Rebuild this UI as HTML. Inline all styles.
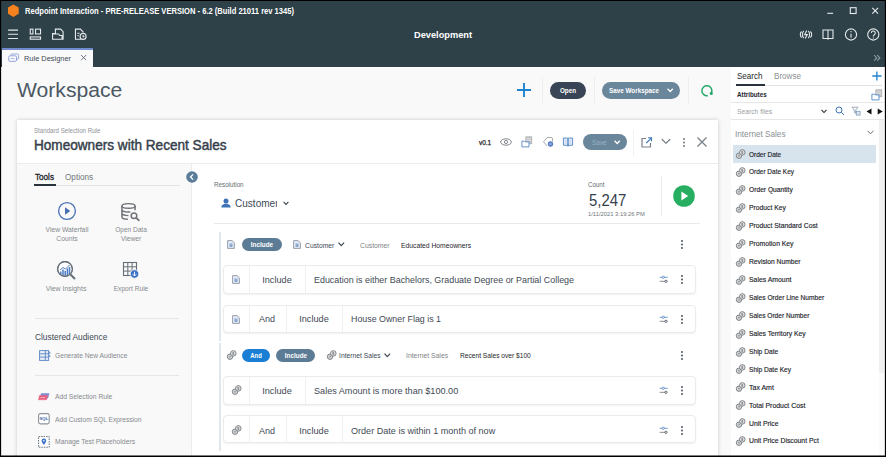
<!DOCTYPE html>
<html><head><meta charset="utf-8"><title>Redpoint Interaction</title>
<style>
*{box-sizing:border-box;margin:0;padding:0}
html,body{width:886px;height:457px;overflow:hidden;background:#000}
body{font-family:"Liberation Sans",sans-serif;position:relative;color:#3c4a57}
.a{position:absolute}
.t{position:absolute;white-space:nowrap;line-height:1}
svg{overflow:visible}
</style></head><body>
<div class="a" style="left:1px;top:1px;width:884px;height:455px;background:#f9f9f9;"></div>
<div class="a" style="left:1px;top:1px;width:884px;height:66.4px;background:#2e4048;"></div>
<div class="a" style="left:93.2px;top:67.4px;width:792px;height:1px;background:#fff;"></div>
<div class="a" style="left:2px;top:47.6px;width:91.2px;height:20.4px;background:#f9f9f9;border-top:2.100px solid #7189cd"></div>
<div class="a" style="left:731px;top:67.4px;width:154px;height:388.6px;background:#fff;"></div>
<div class="a" style="left:17px;top:120px;width:700.6px;height:340px;background:#fff;box-shadow:0 0 4px rgba(0,0,0,.2)"></div>
<div class="a" style="left:17px;top:163px;width:174px;height:293px;background:#f9f9f9;"></div>
<div class="a" style="left:17px;top:163px;width:700.6px;height:1px;background:#ececec;"></div>
<div class="a" style="left:191px;top:164px;width:1px;height:292px;background:#ececec;"></div>
<svg class="a" style="left:0px;top:0px" width="24" height="22" viewBox="0 0 24 22" ><path d="M13.350 4.500 L18.700 7.600 L18.700 13.800 L13.350 16.900 L8 13.800 L8 7.600 Z" fill="#f5821f"/></svg>
<div class="t" style="left:24.60px;top:7.30px;font-size:8.4px;color:#fff;transform:scaleX(0.9045);transform-origin:left center;font-weight:bold"><span id="t1">Redpoint Interaction - PRE-RELEASE VERSION - 6.2 (Build 21011 rev 1345)</span></div>
<svg class="a" style="left:822px;top:4px" width="60" height="14" viewBox="0 0 60 14" fill="none" stroke="#e8ecee" stroke-width="1.100"><path d="M5.300 9.300h5.800"/><rect x="28.300" y="3.700" width="5.800" height="5.800"/><path d="M50.300 3.800l5.800 5.800M56.100 3.800l-5.800 5.800"/></svg>
<svg class="a" style="left:6px;top:26px" width="90" height="18" viewBox="0 0 90 18" fill="none" stroke="#e4e8ea" stroke-width="1.100"><path d="M2.100 4.100h9.900M2.100 8.300h9.900M2.100 12.500h9.900"/>
<rect x="24.250" y="3.150" width="2.700" height="4.800"/><rect x="29.550" y="3.150" width="5" height="4.800"/><rect x="24.250" y="10.950" width="10.300" height="2.250"/>
<path d="M46.550 13.200 V7.650 H49.400 V3.150 H54.600 L57.100 5.700 V13.200 Z M46.800 8 h5.800 l1 1.500 h2.500 v3.500"/>
<path d="M75 13.200 H69.450 V3.150 H74.400 L77 5.800 V6.500 M71.300 7.300 h2.300 M71.300 9.700 h1.500"/><circle cx="77.100" cy="10.400" r="3"/><path d="M77.100 8.900 v1.700 h1.300"/></svg>
<div class="t" style="left:293.00px;width:300px;text-align:center;top:30.80px;font-size:9.2px;color:#fff;transform:scaleX(1.0051);transform-origin:center center;font-weight:bold"><span id="t2">Development</span></div>
<svg class="a" style="left:796px;top:26px" width="86" height="18" viewBox="0 0 86 18" fill="none" stroke="#e4e8ea" stroke-width="1.100"><path d="M7.800 4.800 C6 6.300 6 10.700 7.800 12.200 M5.600 5.500 C3.900 7 3.900 10 5.600 11.500 M12.200 4.800 C14 6.300 14 10.700 12.200 12.200 M14.400 5.500 C16.100 7 16.100 10 14.400 11.500 M10.800 4.600 L8.700 8.600 h2.600 L9.200 12.400"/>
<path d="M27 4 h5 v8.500 h-5 z M32 4 h5 v8.500 h-5 z M32 12.500 v1.300"/>
<circle cx="55" cy="8.500" r="5.600"/><path d="M55 7.800 v4 M55 5 v1.300"/>
<circle cx="77.300" cy="8.500" r="5.600"/><path d="M75.300 7 a2 2 0 1 1 3 1.700 c-0.800 0.500 -1 0.900 -1 1.700 M77.300 11.600 v1"/></svg>
<svg class="a" style="left:873px;top:54px" width="8" height="8" viewBox="0 0 8 8" fill="none" stroke="#8c9da6" stroke-width="1.150"><path d="M1.200 1.200 L3.700 3.900 L1.200 6.600 M4.300 1.200 L6.800 3.900 L4.300 6.600"/></svg>
<svg class="a" style="left:7px;top:52px" width="14" height="12" viewBox="0 0 14 12" fill="none" stroke="#8b9dd9" stroke-width="0.900"><rect x="3.800" y="2" width="7.800" height="5.300" rx="1.400"/><rect x="1.700" y="3.800" width="7.800" height="5.600" rx="1.400" fill="#f9f9f9"/><path d="M3.500 6.600 h4.200" stroke-width="0.700"/></svg>
<div class="t" style="left:24.00px;top:54.70px;font-size:8px;color:#3c4a57;transform:scaleX(0.9270);transform-origin:left center;"><span id="t3">Rule Designer</span></div>
<svg class="a" style="left:80px;top:54px" width="7" height="7" viewBox="0 0 7 7" stroke="#5f6870" stroke-width="0.900"><path d="M1 1 L6.200 6.200 M6.200 1 L1 6.200"/></svg>
<div class="t" style="left:17.00px;top:80.20px;font-size:20px;color:#4b5864;transform:scaleX(1.0565);transform-origin:left center;"><span id="t4">Workspace</span></div>
<svg class="a" style="left:516px;top:82px" width="16" height="16" viewBox="0 0 16 16" stroke="#1e83cf" stroke-width="1.900"><path d="M8 1v14M1 8h14"/></svg>
<div class="a" style="left:541.5px;top:77px;width:1px;height:26px;background:#ededed;"></div>
<div class="a" style="left:593.5px;top:77px;width:1px;height:26px;background:#ededed;"></div>
<div class="a" style="left:688px;top:77px;width:1px;height:26px;background:#ededed;"></div>
<div class="a" style="left:549.500px;top:81.800px;width:36.500px;height:16.800px;border-radius:9px;background:#394556"></div>
<div class="t" style="left:417.70px;width:300px;text-align:center;top:86.70px;font-size:7.2px;color:#fff;transform:scaleX(0.8762);transform-origin:center center;font-weight:bold"><span id="t5">Open</span></div>
<div class="a" style="left:602px;top:81.800px;width:77.600px;height:16.800px;border-radius:9px;background:#69869b"></div>
<div class="t" style="left:608.80px;top:86.70px;font-size:7.2px;color:#fff;transform:scaleX(0.8787);transform-origin:left center;font-weight:bold"><span id="t6">Save Workspace</span></div>
<svg class="a" style="left:666.8px;top:88px" width="6.4" height="5" viewBox="0 0 6.4 5" fill="none" stroke="#fff" stroke-width="1.300"><path d="M0.600 0.700 L3.200 3.500 L5.800 0.700"/></svg>
<svg class="a" style="left:699.7px;top:83.5px" width="14" height="14" viewBox="0 0 14 14" fill="none" stroke="#25a86a" stroke-width="1.500"><path d="M7.800 11.700 A5 5 0 1 1 11.700 8.200"/><path d="M9.700 8.300 L12.700 7.900 L12.500 10.900 L10 10.800 Z" fill="#1fa565" stroke="none"/></svg>
<div class="t" style="left:737.40px;top:72.45px;font-size:8.5px;color:#1e252c;transform:scaleX(0.9429);transform-origin:left center;"><span id="t7">Search</span></div>
<div class="t" style="left:773.50px;top:72.45px;font-size:8.5px;color:#8a8f94;transform:scaleX(0.9491);transform-origin:left center;"><span id="t8">Browse</span></div>
<div class="a" style="left:736px;top:84.5px;width:146px;height:1px;background:#e3e3e3;"></div>
<div class="a" style="left:736px;top:83.5px;width:28.7px;height:2px;background:#2a333c;"></div>
<svg class="a" style="left:872px;top:70.6px" width="10" height="10" viewBox="0 0 10 10" stroke="#1e83cf" stroke-width="1.350"><path d="M4.900 0.400v9.200M0.300 5h9.200"/></svg>
<div class="t" style="left:737.40px;top:90.80px;font-size:7.2px;color:#1e252c;transform:scaleX(0.8747);transform-origin:left center;font-weight:bold"><span id="t9">Attributes</span></div>
<svg class="a" style="left:871px;top:88.5px" width="12" height="12" viewBox="0 0 12 12" fill="none" stroke="#3d78b8" stroke-width="0.900"><rect x="4.800" y="0.800" width="6" height="7" fill="#c4c6c9" stroke="#a9acb0" stroke-width="0.700"/><path d="M5.500 2.800 h4.600 M5.500 4.600 h4.600" stroke="#e6e7e8" stroke-width="0.700"/><path d="M0.900 5.200 h2.600 l0.700 0.700 h3.800 v5 h-7.100 z" fill="#fff" stroke="#5189c7" stroke-width="0.900"/></svg>
<div class="a" style="left:731px;top:102px;width:153px;height:1px;background:#e6e6e6;"></div>
<div class="t" style="left:737.40px;top:109.05px;font-size:7.1px;color:#9a9fa4;transform:scaleX(0.9497);transform-origin:left center;"><span id="t10">Search files</span></div>
<svg class="a" style="left:821.2px;top:109px" width="6" height="5" viewBox="0 0 6 5" fill="none" stroke="#333" stroke-width="1.100"><path d="M0.500 0.800 L3 3.500 L5.500 0.800"/></svg>
<svg class="a" style="left:835px;top:106.3px" width="10" height="10" viewBox="0 0 10 10" fill="none" stroke="#3b74b8" stroke-width="1"><circle cx="4" cy="4" r="3"/><path d="M6.300 6.300 L9 9"/></svg>
<svg class="a" style="left:851px;top:106px" width="11" height="11" viewBox="0 0 11 11" fill="none" stroke="#8496aa" stroke-width="0.800"><path d="M1 1.200 h6 l-2.300 2.900 v3.200 l-1.400 -0.900 v-2.300 z"/><rect x="5.300" y="5.300" width="3.800" height="3.800" fill="#dfe6ee" stroke="#7f9bbd"/></svg>
<svg class="a" style="left:866px;top:107.5px" width="18" height="7" viewBox="0 0 18 7" fill="#111"><path d="M5.500 0.500 v6 L0.500 3.500 z M11.700 0.500 v6 L16.700 3.500 z"/></svg>
<div class="a" style="left:731px;top:119px;width:153px;height:1px;background:#e6e6e6;"></div>
<div class="a" style="left:878.5px;top:120px;width:5.5px;height:335.5px;background:#fafafa;"></div>
<div class="a" style="left:878.5px;top:120px;width:5.5px;height:253px;background:#f0f0f0;"></div>
<div class="t" style="left:735.00px;top:129.70px;font-size:8.6px;color:#8a8f94;transform:scaleX(0.9523);transform-origin:left center;"><span id="t11">Internet Sales</span></div>
<svg class="a" style="left:867.1px;top:130px" width="7" height="5" viewBox="0 0 7 5" fill="none" stroke="#6a6f74" stroke-width="1"><path d="M0.600 0.800 L3.500 3.800 L6.400 0.800"/></svg>
<div class="a" style="left:733px;top:145.2px;width:143px;height:17.5px;background:#d7e4ee;"></div>
<svg class="a" style="left:735.0px;top:149.3px" width="11" height="10" viewBox="0 0 11 10" fill="none" stroke="#777b80" stroke-width="0.950"><circle cx="4" cy="6.700" r="2.700" fill="#d9dadb"/><circle cx="7.300" cy="3.400" r="2.750" fill="#e4e5e6"/><path d="M7.300 1.900 v3 M8.100 2.500 h-1.200 a0.500 0.500 0 0 0 0 1 h0.800 a0.500 0.500 0 0 1 0 1 h-1.300" stroke-width="0.550"/><path d="M2.800 6.700 h2.400 M4 5.500 v2.400" stroke-width="0.500"/></svg>
<div class="t" style="left:748.50px;top:151.55px;font-size:7.1px;color:#1e252c;transform:scaleX(0.9175);transform-origin:left center;-webkit-text-stroke:0.15px #1e252c;"><span id="t12">Order Date</span></div>
<svg class="a" style="left:735.0px;top:167.23000000000002px" width="11" height="10" viewBox="0 0 11 10" fill="none" stroke="#777b80" stroke-width="0.950"><circle cx="4" cy="6.700" r="2.700" fill="#d9dadb"/><circle cx="7.300" cy="3.400" r="2.750" fill="#e4e5e6"/><path d="M7.300 1.900 v3 M8.100 2.500 h-1.200 a0.500 0.500 0 0 0 0 1 h0.800 a0.500 0.500 0 0 1 0 1 h-1.300" stroke-width="0.550"/><path d="M2.800 6.700 h2.400 M4 5.500 v2.400" stroke-width="0.500"/></svg>
<div class="t" style="left:748.50px;top:169.48px;font-size:7.1px;color:#1e252c;transform:scaleX(0.9128);transform-origin:left center;-webkit-text-stroke:0.15px #1e252c;"><span id="t13">Order Date Key</span></div>
<svg class="a" style="left:735.0px;top:185.16000000000003px" width="11" height="10" viewBox="0 0 11 10" fill="none" stroke="#777b80" stroke-width="0.950"><circle cx="4" cy="6.700" r="2.700" fill="#d9dadb"/><circle cx="7.300" cy="3.400" r="2.750" fill="#e4e5e6"/><path d="M7.300 1.900 v3 M8.100 2.500 h-1.200 a0.500 0.500 0 0 0 0 1 h0.800 a0.500 0.500 0 0 1 0 1 h-1.300" stroke-width="0.550"/><path d="M2.800 6.700 h2.400 M4 5.500 v2.400" stroke-width="0.500"/></svg>
<div class="t" style="left:748.50px;top:187.41px;font-size:7.1px;color:#1e252c;transform:scaleX(0.9413);transform-origin:left center;-webkit-text-stroke:0.15px #1e252c;"><span id="t14">Order Quantity</span></div>
<svg class="a" style="left:735.0px;top:203.09px" width="11" height="10" viewBox="0 0 11 10" fill="none" stroke="#777b80" stroke-width="0.950"><circle cx="4" cy="6.700" r="2.700" fill="#d9dadb"/><circle cx="7.300" cy="3.400" r="2.750" fill="#e4e5e6"/><path d="M7.300 1.900 v3 M8.100 2.500 h-1.200 a0.500 0.500 0 0 0 0 1 h0.800 a0.500 0.500 0 0 1 0 1 h-1.300" stroke-width="0.550"/><path d="M2.800 6.700 h2.400 M4 5.500 v2.400" stroke-width="0.500"/></svg>
<div class="t" style="left:748.50px;top:205.34px;font-size:7.1px;color:#1e252c;transform:scaleX(0.9520);transform-origin:left center;-webkit-text-stroke:0.15px #1e252c;"><span id="t15">Product Key</span></div>
<svg class="a" style="left:735.0px;top:221.02px" width="11" height="10" viewBox="0 0 11 10" fill="none" stroke="#777b80" stroke-width="0.950"><circle cx="4" cy="6.700" r="2.700" fill="#d9dadb"/><circle cx="7.300" cy="3.400" r="2.750" fill="#e4e5e6"/><path d="M7.300 1.900 v3 M8.100 2.500 h-1.200 a0.500 0.500 0 0 0 0 1 h0.800 a0.500 0.500 0 0 1 0 1 h-1.300" stroke-width="0.550"/><path d="M2.800 6.700 h2.400 M4 5.500 v2.400" stroke-width="0.500"/></svg>
<div class="t" style="left:748.50px;top:223.27px;font-size:7.1px;color:#1e252c;transform:scaleX(0.9573);transform-origin:left center;-webkit-text-stroke:0.15px #1e252c;"><span id="t16">Product Standard Cost</span></div>
<svg class="a" style="left:735.0px;top:238.95000000000002px" width="11" height="10" viewBox="0 0 11 10" fill="none" stroke="#777b80" stroke-width="0.950"><circle cx="4" cy="6.700" r="2.700" fill="#d9dadb"/><circle cx="7.300" cy="3.400" r="2.750" fill="#e4e5e6"/><path d="M7.300 1.900 v3 M8.100 2.500 h-1.200 a0.500 0.500 0 0 0 0 1 h0.800 a0.500 0.500 0 0 1 0 1 h-1.300" stroke-width="0.550"/><path d="M2.800 6.700 h2.400 M4 5.500 v2.400" stroke-width="0.500"/></svg>
<div class="t" style="left:748.50px;top:241.20px;font-size:7.1px;color:#1e252c;transform:scaleX(0.9563);transform-origin:left center;-webkit-text-stroke:0.15px #1e252c;"><span id="t17">Promotion Key</span></div>
<svg class="a" style="left:735.0px;top:256.88px" width="11" height="10" viewBox="0 0 11 10" fill="none" stroke="#777b80" stroke-width="0.950"><circle cx="4" cy="6.700" r="2.700" fill="#d9dadb"/><circle cx="7.300" cy="3.400" r="2.750" fill="#e4e5e6"/><path d="M7.300 1.900 v3 M8.100 2.500 h-1.200 a0.500 0.500 0 0 0 0 1 h0.800 a0.500 0.500 0 0 1 0 1 h-1.300" stroke-width="0.550"/><path d="M2.800 6.700 h2.400 M4 5.500 v2.400" stroke-width="0.500"/></svg>
<div class="t" style="left:748.50px;top:259.13px;font-size:7.1px;color:#1e252c;transform:scaleX(0.9466);transform-origin:left center;-webkit-text-stroke:0.15px #1e252c;"><span id="t18">Revision Number</span></div>
<svg class="a" style="left:735.0px;top:274.81px" width="11" height="10" viewBox="0 0 11 10" fill="none" stroke="#777b80" stroke-width="0.950"><circle cx="4" cy="6.700" r="2.700" fill="#d9dadb"/><circle cx="7.300" cy="3.400" r="2.750" fill="#e4e5e6"/><path d="M7.300 1.900 v3 M8.100 2.500 h-1.200 a0.500 0.500 0 0 0 0 1 h0.800 a0.500 0.500 0 0 1 0 1 h-1.300" stroke-width="0.550"/><path d="M2.800 6.700 h2.400 M4 5.500 v2.400" stroke-width="0.500"/></svg>
<div class="t" style="left:748.50px;top:277.06px;font-size:7.1px;color:#1e252c;transform:scaleX(0.9685);transform-origin:left center;-webkit-text-stroke:0.15px #1e252c;"><span id="t19">Sales Amount</span></div>
<svg class="a" style="left:735.0px;top:292.74px" width="11" height="10" viewBox="0 0 11 10" fill="none" stroke="#777b80" stroke-width="0.950"><circle cx="4" cy="6.700" r="2.700" fill="#d9dadb"/><circle cx="7.300" cy="3.400" r="2.750" fill="#e4e5e6"/><path d="M7.300 1.900 v3 M8.100 2.500 h-1.200 a0.500 0.500 0 0 0 0 1 h0.800 a0.500 0.500 0 0 1 0 1 h-1.300" stroke-width="0.550"/><path d="M2.800 6.700 h2.400 M4 5.500 v2.400" stroke-width="0.500"/></svg>
<div class="t" style="left:748.50px;top:294.99px;font-size:7.1px;color:#1e252c;transform:scaleX(0.9336);transform-origin:left center;-webkit-text-stroke:0.15px #1e252c;"><span id="t20">Sales Order Line Number</span></div>
<svg class="a" style="left:735.0px;top:310.67px" width="11" height="10" viewBox="0 0 11 10" fill="none" stroke="#777b80" stroke-width="0.950"><circle cx="4" cy="6.700" r="2.700" fill="#d9dadb"/><circle cx="7.300" cy="3.400" r="2.750" fill="#e4e5e6"/><path d="M7.300 1.900 v3 M8.100 2.500 h-1.200 a0.500 0.500 0 0 0 0 1 h0.800 a0.500 0.500 0 0 1 0 1 h-1.300" stroke-width="0.550"/><path d="M2.800 6.700 h2.400 M4 5.500 v2.400" stroke-width="0.500"/></svg>
<div class="t" style="left:748.50px;top:312.92px;font-size:7.1px;color:#1e252c;transform:scaleX(0.9283);transform-origin:left center;-webkit-text-stroke:0.15px #1e252c;"><span id="t21">Sales Order Number</span></div>
<svg class="a" style="left:735.0px;top:328.6px" width="11" height="10" viewBox="0 0 11 10" fill="none" stroke="#777b80" stroke-width="0.950"><circle cx="4" cy="6.700" r="2.700" fill="#d9dadb"/><circle cx="7.300" cy="3.400" r="2.750" fill="#e4e5e6"/><path d="M7.300 1.900 v3 M8.100 2.500 h-1.200 a0.500 0.500 0 0 0 0 1 h0.800 a0.500 0.500 0 0 1 0 1 h-1.300" stroke-width="0.550"/><path d="M2.800 6.700 h2.400 M4 5.500 v2.400" stroke-width="0.500"/></svg>
<div class="t" style="left:748.50px;top:330.85px;font-size:7.1px;color:#1e252c;transform:scaleX(0.9528);transform-origin:left center;-webkit-text-stroke:0.15px #1e252c;"><span id="t22">Sales Territory Key</span></div>
<svg class="a" style="left:735.0px;top:346.53px" width="11" height="10" viewBox="0 0 11 10" fill="none" stroke="#777b80" stroke-width="0.950"><circle cx="4" cy="6.700" r="2.700" fill="#d9dadb"/><circle cx="7.300" cy="3.400" r="2.750" fill="#e4e5e6"/><path d="M7.300 1.900 v3 M8.100 2.500 h-1.200 a0.500 0.500 0 0 0 0 1 h0.800 a0.500 0.500 0 0 1 0 1 h-1.300" stroke-width="0.550"/><path d="M2.800 6.700 h2.400 M4 5.500 v2.400" stroke-width="0.500"/></svg>
<div class="t" style="left:748.50px;top:348.78px;font-size:7.1px;color:#1e252c;transform:scaleX(0.9372);transform-origin:left center;-webkit-text-stroke:0.15px #1e252c;"><span id="t23">Ship Date</span></div>
<svg class="a" style="left:735.0px;top:364.46000000000004px" width="11" height="10" viewBox="0 0 11 10" fill="none" stroke="#777b80" stroke-width="0.950"><circle cx="4" cy="6.700" r="2.700" fill="#d9dadb"/><circle cx="7.300" cy="3.400" r="2.750" fill="#e4e5e6"/><path d="M7.300 1.900 v3 M8.100 2.500 h-1.200 a0.500 0.500 0 0 0 0 1 h0.800 a0.500 0.500 0 0 1 0 1 h-1.300" stroke-width="0.550"/><path d="M2.800 6.700 h2.400 M4 5.500 v2.400" stroke-width="0.500"/></svg>
<div class="t" style="left:748.50px;top:366.71px;font-size:7.1px;color:#1e252c;transform:scaleX(0.9259);transform-origin:left center;-webkit-text-stroke:0.15px #1e252c;"><span id="t24">Ship Date Key</span></div>
<svg class="a" style="left:735.0px;top:382.39px" width="11" height="10" viewBox="0 0 11 10" fill="none" stroke="#777b80" stroke-width="0.950"><circle cx="4" cy="6.700" r="2.700" fill="#d9dadb"/><circle cx="7.300" cy="3.400" r="2.750" fill="#e4e5e6"/><path d="M7.300 1.900 v3 M8.100 2.500 h-1.200 a0.500 0.500 0 0 0 0 1 h0.800 a0.500 0.500 0 0 1 0 1 h-1.300" stroke-width="0.550"/><path d="M2.800 6.700 h2.400 M4 5.500 v2.400" stroke-width="0.500"/></svg>
<div class="t" style="left:748.50px;top:384.64px;font-size:7.1px;color:#1e252c;transform:scaleX(0.9867);transform-origin:left center;-webkit-text-stroke:0.15px #1e252c;"><span id="t25">Tax Amt</span></div>
<svg class="a" style="left:735.0px;top:400.32px" width="11" height="10" viewBox="0 0 11 10" fill="none" stroke="#777b80" stroke-width="0.950"><circle cx="4" cy="6.700" r="2.700" fill="#d9dadb"/><circle cx="7.300" cy="3.400" r="2.750" fill="#e4e5e6"/><path d="M7.300 1.900 v3 M8.100 2.500 h-1.200 a0.500 0.500 0 0 0 0 1 h0.800 a0.500 0.500 0 0 1 0 1 h-1.300" stroke-width="0.550"/><path d="M2.800 6.700 h2.400 M4 5.500 v2.400" stroke-width="0.500"/></svg>
<div class="t" style="left:748.50px;top:402.57px;font-size:7.1px;color:#1e252c;transform:scaleX(0.9729);transform-origin:left center;-webkit-text-stroke:0.15px #1e252c;"><span id="t26">Total Product Cost</span></div>
<svg class="a" style="left:735.0px;top:418.25px" width="11" height="10" viewBox="0 0 11 10" fill="none" stroke="#777b80" stroke-width="0.950"><circle cx="4" cy="6.700" r="2.700" fill="#d9dadb"/><circle cx="7.300" cy="3.400" r="2.750" fill="#e4e5e6"/><path d="M7.300 1.900 v3 M8.100 2.500 h-1.200 a0.500 0.500 0 0 0 0 1 h0.800 a0.500 0.500 0 0 1 0 1 h-1.300" stroke-width="0.550"/><path d="M2.800 6.700 h2.400 M4 5.500 v2.400" stroke-width="0.500"/></svg>
<div class="t" style="left:748.50px;top:420.50px;font-size:7.1px;color:#1e252c;transform:scaleX(0.9561);transform-origin:left center;-webkit-text-stroke:0.15px #1e252c;"><span id="t27">Unit Price</span></div>
<svg class="a" style="left:735.0px;top:436.18px" width="11" height="10" viewBox="0 0 11 10" fill="none" stroke="#777b80" stroke-width="0.950"><circle cx="4" cy="6.700" r="2.700" fill="#d9dadb"/><circle cx="7.300" cy="3.400" r="2.750" fill="#e4e5e6"/><path d="M7.300 1.900 v3 M8.100 2.500 h-1.200 a0.500 0.500 0 0 0 0 1 h0.800 a0.500 0.500 0 0 1 0 1 h-1.300" stroke-width="0.550"/><path d="M2.800 6.700 h2.400 M4 5.500 v2.400" stroke-width="0.500"/></svg>
<div class="t" style="left:748.50px;top:438.43px;font-size:7.1px;color:#1e252c;transform:scaleX(0.9621);transform-origin:left center;-webkit-text-stroke:0.15px #1e252c;"><span id="t28">Unit Price Discount Pct</span></div>
<div class="t" style="left:33.80px;top:128.15px;font-size:6.3px;color:#8d9297;transform:scaleX(0.9776);transform-origin:left center;"><span id="t29">Standard Selection Rule</span></div>
<div class="t" style="left:34.40px;top:137.90px;font-size:14px;color:#363f4b;transform:scaleX(0.9707);transform-origin:left center;-webkit-text-stroke:0.45px #363f4b"><span id="t30">Homeowners with Recent Sales</span></div>
<div class="t" style="left:479.00px;top:138.70px;font-size:7px;color:#1e252c;transform:scaleX(0.9218);transform-origin:left center;-webkit-text-stroke:0.25px #1e252c"><span id="t31">v0.1</span></div>
<svg class="a" style="left:498.5px;top:136px" width="14" height="12" viewBox="0 0 14 12" fill="none" stroke="#7d838a" stroke-width="0.950"><ellipse cx="7" cy="6" rx="5.400" ry="3.200"/><circle cx="7" cy="6" r="1.600"/></svg>
<svg class="a" style="left:520.5px;top:136px" width="12" height="12" viewBox="0 0 12 12" fill="none" stroke="#3d78b8" stroke-width="0.900"><rect x="4.800" y="0.800" width="6" height="7" fill="#c4c6c9" stroke="#a9acb0" stroke-width="0.700"/><path d="M5.500 2.800 h4.600 M5.500 4.600 h4.600" stroke="#e6e7e8" stroke-width="0.700"/><path d="M0.900 5.200 h2.600 l0.700 0.700 h3.800 v5 h-7.100 z" fill="#fff" stroke="#5189c7" stroke-width="0.900"/></svg>
<svg class="a" style="left:542px;top:136px" width="13" height="12" viewBox="0 0 13 12" fill="none" stroke="#a0a5aa" stroke-width="0.950"><path d="M5.200 1.500 h3.800 a1.500 1.500 0 0 1 1.500 1.500 v2.500 M5.200 1.500 L1.500 5.800 L5 10" /><circle cx="8.500" cy="8" r="2.700" fill="#5b7fc5" stroke="none"/><path d="M7.300 8 h2.400" stroke="#dfe7f5" stroke-width="0.800"/></svg>
<svg class="a" style="left:562px;top:136px" width="13" height="12" viewBox="0 0 13 12" fill="none" stroke="#4a7fc0" stroke-width="0.850"><path d="M1.400 2 h3.600 a1 1 0 0 1 1 1 v6.300 h-4.600 z M10.600 2 h-3.600 a1 1 0 0 0 -1 1 v6.300 h4.600 z" fill="#e6eef8"/><path d="M5 9.300 l1 1.200 l1 -1.200" stroke-width="0.700"/><path d="M2.600 4.300h2M2.600 5.800h2M2.600 7.300h2M7.400 4.300h2M7.400 5.800h2M7.400 7.300h2" stroke="#a9c1e0" stroke-width="0.500"/></svg>
<div class="a" style="left:582.900px;top:134px;width:44px;height:16.400px;border-radius:9px;background:#69869b"></div>
<div class="t" style="left:591.90px;top:138.70px;font-size:7.2px;color:#9cb1c2;transform:scaleX(0.8969);transform-origin:left center;"><span id="t32">Save</span></div>
<svg class="a" style="left:613.9px;top:140.3px" width="6.4" height="5" viewBox="0 0 6.4 5" fill="none" stroke="#fff" stroke-width="1.300"><path d="M0.600 0.700 L3.200 3.500 L5.800 0.700"/></svg>
<div class="a" style="left:633px;top:130px;width:1px;height:26px;background:#f1f1f1;"></div>
<svg class="a" style="left:641px;top:136.5px" width="12" height="11" viewBox="0 0 12 11" fill="none" stroke="#7a8087" stroke-width="1.200"><path d="M5 1.500 H1 V10 H9.500 V6"/><path d="M7 0.800 H10.500 V4.300 M10.500 0.800 L5.300 6" stroke="#3d78b8" stroke-width="1.100"/></svg>
<svg class="a" style="left:661.4px;top:138px" width="10" height="7" viewBox="0 0 10 7" fill="none" stroke="#5d6771" stroke-width="1.100"><path d="M0.800 1.200 L5 5.300 L9.200 1.200"/></svg>
<svg class="a" style="left:682px;top:136.6px" width="4" height="11" viewBox="0 0 4 11" fill="#666c73"><circle cx="2" cy="2" r="0.900"/><circle cx="2" cy="5.500" r="0.900"/><circle cx="2" cy="9" r="0.900"/></svg>
<svg class="a" style="left:696.7px;top:137.2px" width="10" height="10" viewBox="0 0 10 10" fill="none" stroke="#7a8087" stroke-width="1.250"><path d="M0.500 0.500 L9.500 9.500 M9.500 0.500 L0.500 9.500"/></svg>
<div class="t" style="left:35.20px;top:173.25px;font-size:8.5px;color:#1e252c;transform:scaleX(0.9575);transform-origin:left center;-webkit-text-stroke:0.3px #1e252c"><span id="t33">Tools</span></div>
<div class="t" style="left:65.00px;top:173.25px;font-size:8.5px;color:#70767c;transform:scaleX(0.9626);transform-origin:left center;"><span id="t34">Options</span></div>
<div class="a" style="left:34px;top:184.7px;width:145.5px;height:1px;background:#e3e3e3;"></div>
<div class="a" style="left:33.8px;top:184px;width:22.2px;height:2px;background:#2a333c;"></div>
<svg class="a" style="left:56.7px;top:201.2px" width="20" height="20" viewBox="0 0 20 20" ><circle cx="10" cy="10" r="8.400" stroke="#4670b2" stroke-width="1.300" fill="none"/><path d="M8 6.300 L13.300 10 L8 13.700 Z" fill="#4670b2"/></svg>
<div class="t" style="left:-83.30px;width:300px;text-align:center;top:226.20px;font-size:7px;color:#868a8f;transform:scaleX(0.9648);transform-origin:center center;"><span id="t35">View Waterfall</span></div>
<div class="t" style="left:-83.30px;width:300px;text-align:center;top:234.80px;font-size:7px;color:#868a8f;transform:scaleX(0.9600);transform-origin:center center;"><span id="t36">Counts</span></div>
<svg class="a" style="left:120px;top:201.5px" width="22" height="20" viewBox="0 0 22 20" fill="none" stroke="#6f7378" stroke-width="1.450"><ellipse cx="8.500" cy="3.900" rx="6.600" ry="2.300"/><path d="M1.900 3.900 v10.800 c0 1.500 3 2.500 6 2.500 M15.100 3.900 v4.300 M1.900 7.500 c0 1.500 3 2.500 6.600 2.500 c0.800 0 1.300 -0.050 1.900 -0.150 M1.900 11.100 c0 1.500 3 2.500 6.600 2.500"/><circle cx="14" cy="13.800" r="2.800" stroke-width="1.500"/><path d="M16.100 15.900 L19.300 18.700" stroke-width="1.800"/></svg>
<div class="t" style="left:-19.40px;width:300px;text-align:center;top:226.20px;font-size:7px;color:#868a8f;transform:scaleX(0.9333);transform-origin:center center;"><span id="t37">Open Data</span></div>
<div class="t" style="left:-19.40px;width:300px;text-align:center;top:234.80px;font-size:7px;color:#868a8f;transform:scaleX(0.9492);transform-origin:center center;"><span id="t38">Viewer</span></div>
<svg class="a" style="left:56px;top:260px" width="20" height="20" viewBox="0 0 20 20" ><circle cx="9" cy="9" r="7.400" stroke="#666f78" stroke-width="1.100" fill="#fff"/><path d="M4 10 L7 7.500 L9.500 9 L13.500 5" stroke="#4670b2" stroke-width="0.900" fill="none"/><path d="M4.800 14.500 v-3 M7 15.500 v-6 M9.200 15.800 v-5 M11.400 15.500 v-7 M13.500 14 v-7" stroke="#4c7cc4" stroke-width="1.500"/><circle cx="9" cy="9" r="7.400" stroke="#666f78" stroke-width="1.100" fill="none"/><path d="M14.500 14.500 L19 19" stroke="#666f78" stroke-width="1.900"/></svg>
<div class="t" style="left:-83.70px;width:300px;text-align:center;top:284.70px;font-size:7px;color:#868a8f;transform:scaleX(0.9897);transform-origin:center center;"><span id="t39">View Insights</span></div>
<svg class="a" style="left:122px;top:260.5px" width="20" height="20" viewBox="0 0 20 20" ><rect x="1.500" y="1.500" width="13" height="13" fill="none" stroke="#666f78" stroke-width="1.100"/><path d="M1.500 5.800 h13 M1.500 10.100 h13 M5.800 1.500 v13 M10.100 1.500 v13" stroke="#666f78" stroke-width="1"/><circle cx="12.500" cy="13" r="4.300" fill="#3f73c7" stroke="#f9f9f9" stroke-width="0.800"/><path d="M12.500 10.800 v4 M10.800 13.200 L12.500 15 L14.200 13.200" stroke="#fff" stroke-width="0.900" fill="none"/></svg>
<div class="t" style="left:-19.30px;width:300px;text-align:center;top:284.70px;font-size:7px;color:#868a8f;transform:scaleX(0.9459);transform-origin:center center;"><span id="t40">Export Rule</span></div>
<div class="a" style="left:34.5px;top:318.4px;width:144px;height:1px;background:#e6e6e6;"></div>
<div class="t" style="left:34.80px;top:333.25px;font-size:8.7px;color:#3c4a57;transform:scaleX(0.9596);transform-origin:left center;"><span id="t41">Clustered Audience</span></div>
<svg class="a" style="left:38.6px;top:349.8px" width="11" height="11" viewBox="0 0 11 11" fill="none" stroke="#5b86c5" stroke-width="0.900"><rect x="0.600" y="0.600" width="9" height="9.800" fill="#e8eef6"/><path d="M0.600 3.800 h9 M0.600 7.100 h9 M6.300 0.600 v9.800 M9.600 2 h1.200 v2 M9.600 5.300 h1.200 v2"/></svg>
<div class="t" style="left:55.00px;top:351.90px;font-size:7px;color:#868a8f;transform:scaleX(0.9540);transform-origin:left center;"><span id="t42">Generate New Audience</span></div>
<div class="a" style="left:34.5px;top:375px;width:144px;height:1px;background:#e6e6e6;"></div>
<svg class="a" style="left:38px;top:392.8px" width="12" height="8" viewBox="0 0 12 8" ><path d="M3.300 0.600 h7.800 l-1.300 4.500 h-7.800 z" fill="#7b90d6" stroke="#7b90d6" stroke-width="0.600" stroke-linejoin="round"/><path d="M1.600 2.400 h8 l-1.100 4.300 h-8 z" fill="#e8607f" stroke="#e8607f" stroke-width="0.600" stroke-linejoin="round"/><path d="M2.500 4.600 h4.500" stroke="#fbd3dc" stroke-width="0.700"/></svg>
<div class="t" style="left:55.00px;top:393.40px;font-size:7px;color:#868a8f;transform:scaleX(0.9623);transform-origin:left center;"><span id="t43">Add Selection Rule</span></div>
<svg class="a" style="left:38px;top:413.3px" width="12" height="12" viewBox="0 0 12 12" ><rect x="0.600" y="0.600" width="10.600" height="10.300" rx="1.800" fill="#fff" stroke="#8d929b" stroke-width="1.100"/><text x="5.900" y="7.300" font-family="Liberation Sans, sans-serif" font-size="4.300" font-weight="bold" fill="#3f66a8" text-anchor="middle">SQL</text></svg>
<div class="t" style="left:55.00px;top:415.90px;font-size:7px;color:#868a8f;transform:scaleX(0.9528);transform-origin:left center;"><span id="t44">Add Custom SQL Expression</span></div>
<svg class="a" style="left:38.3px;top:435.7px" width="12" height="12" viewBox="0 0 12 12" ><rect x="0.600" y="0.600" width="10.600" height="10.600" fill="#fff" stroke="#555f69" stroke-width="0.900" stroke-dasharray="1.500 1"/><path d="M5.900 2.500 a2.300 2.300 0 0 1 2.300 2.300 c0 1.600 -2.300 4.200 -2.300 4.200 s-2.300 -2.600 -2.300 -4.200 a2.300 2.300 0 0 1 2.300 -2.300 z" fill="#3f73c7"/><circle cx="5.900" cy="4.800" r="0.800" fill="#fff"/></svg>
<div class="t" style="left:55.00px;top:438.10px;font-size:7px;color:#868a8f;transform:scaleX(0.9724);transform-origin:left center;"><span id="t45">Manage Test Placeholders</span></div>
<svg class="a" style="left:185.8px;top:170.6px" width="12" height="12" viewBox="0 0 12 12" ><circle cx="6" cy="6" r="5.800" fill="#5b7d99"/><path d="M7.100 3.400 L4.500 6 L7.100 8.600" stroke="#fff" stroke-width="1.300" fill="none"/></svg>
<div class="t" style="left:214.30px;top:181.95px;font-size:6.5px;color:#666c72;transform:scaleX(0.9636);transform-origin:left center;"><span id="t46">Resolution</span></div>
<svg class="a" style="left:220.5px;top:198px" width="10" height="10" viewBox="0 0 10 10" fill="#3f73b7"><circle cx="5" cy="2.900" r="2.500"/><path d="M0.300 9.400 C0.300 6.800 2.500 6.300 4 5.800 h2 C7.500 6.300 9.700 6.800 9.700 9.400 Z"/></svg>
<div class="a" style="left:234px;top:194px;width:43.400px;height:18px;overflow:hidden"><div class="t" style="left:0.800px;top:3.500px;font-size:11px;color:#3c4a57;transform:scaleX(0.912);transform-origin:left center">Customer</div></div>
<svg class="a" style="left:282.7px;top:200.8px" width="6" height="5" viewBox="0 0 6 5" fill="none" stroke="#3a434c" stroke-width="1.100"><path d="M0.600 0.800 L3 3.400 L5.400 0.800"/></svg>
<div class="t" style="left:588.20px;top:181.95px;font-size:6.5px;color:#666c72;transform:scaleX(0.9447);transform-origin:left center;"><span id="t47">Count</span></div>
<div class="t" style="left:588.60px;top:192.90px;font-size:16px;color:#363f4b;transform:scaleX(0.9339);transform-origin:left center;"><span id="t48">5,247</span></div>
<div class="t" style="left:588.20px;top:210.70px;font-size:6px;color:#70767c;transform:scaleX(0.9691);transform-origin:left center;"><span id="t49">1/11/2021 3:19:26 PM</span></div>
<div class="a" style="left:661px;top:176px;width:1px;height:40px;background:#ececec;"></div>
<svg class="a" style="left:673.2px;top:185.1px" width="22" height="22" viewBox="0 0 22 22" ><circle cx="11" cy="11" r="10.800" fill="#27ae60"/><path d="M8.400 6.500 L15.200 11 L8.400 15.500 Z" fill="#fff"/></svg>
<div class="a" style="left:214.3px;top:223px;width:486px;height:1px;background:#e9e9e9;"></div>
<div class="a" style="left:219.2px;top:232px;width:2px;height:108.8px;background:#e2e7ec;"></div>
<div class="a" style="left:219.2px;top:343px;width:2px;height:108px;background:#e2e7ec;"></div>
<svg class="a" style="left:227.1px;top:240.0px" width="8" height="9" viewBox="0 0 8 9" fill="none" stroke="#9196a3" stroke-width="0.900"><path d="M0.600 0.600 H5 L7.400 2.800 V8.400 H0.600 Z" fill="#e3ebf6"/><path d="M2.300 3.300 h2.700 l0.800 0.800 v2.900 h-3.500 z" fill="#a9bfdf" stroke="none"/><path d="M3 5 h2 M3 6.200 h2" stroke="#5f83bb" stroke-width="0.600"/></svg>
<div class="a" style="left:242.3px;top:237.9px;width:39.3px;height:13px;border-radius:6.500px;background:#5c7c95"></div>
<div class="t" style="left:111.95px;width:300px;text-align:center;top:241.00px;font-size:7px;color:#fff;transform:scaleX(0.9096);transform-origin:center center;font-weight:bold"><span id="t50">Include</span></div>
<svg class="a" style="left:292.9px;top:240.0px" width="8" height="9" viewBox="0 0 8 9" fill="none" stroke="#9196a3" stroke-width="0.900"><path d="M0.600 0.600 H5 L7.400 2.800 V8.400 H0.600 Z" fill="#e3ebf6"/><path d="M2.300 3.300 h2.700 l0.800 0.800 v2.900 h-3.500 z" fill="#a9bfdf" stroke="none"/><path d="M3 5 h2 M3 6.200 h2" stroke="#5f83bb" stroke-width="0.600"/></svg>
<div class="t" style="left:305.10px;top:241.50px;font-size:7px;color:#3c4a57;transform:scaleX(0.9656);transform-origin:left center;"><span id="t51">Customer</span></div>
<svg class="a" style="left:338.0px;top:242.4px" width="6.6" height="5" viewBox="0 0 6.6 5" fill="none" stroke="#3a434c" stroke-width="1.150"><path d="M0.500 0.700 L3.300 3.700 L6.100 0.700"/></svg>
<div class="t" style="left:360.00px;top:241.50px;font-size:7px;color:#7f8489;transform:scaleX(0.9755);transform-origin:left center;"><span id="t52">Customer</span></div>
<div class="t" style="left:401.00px;top:241.50px;font-size:7px;color:#1e252c;transform:scaleX(0.9647);transform-origin:left center;"><span id="t53">Educated Homeowners</span></div>
<svg class="a" style="left:680px;top:239.2px" width="4" height="11" viewBox="0 0 4 11" fill="#3a434c"><circle cx="2" cy="2" r="0.900"/><circle cx="2" cy="5.500" r="0.900"/><circle cx="2" cy="9" r="0.900"/></svg>
<svg class="a" style="left:225.6px;top:350.3px" width="11" height="10" viewBox="0 0 11 10" fill="none" stroke="#777b80" stroke-width="0.950"><circle cx="4" cy="6.700" r="2.700" fill="#d9dadb"/><circle cx="7.300" cy="3.400" r="2.750" fill="#e4e5e6"/><path d="M7.300 1.900 v3 M8.100 2.500 h-1.200 a0.500 0.500 0 0 0 0 1 h0.800 a0.500 0.500 0 0 1 0 1 h-1.300" stroke-width="0.550"/><path d="M2.800 6.700 h2.400 M4 5.500 v2.400" stroke-width="0.500"/></svg>
<div class="a" style="left:242.2px;top:349.0px;width:28.3px;height:13px;border-radius:6.500px;background:#1a7fd4"></div>
<div class="t" style="left:106.35px;width:300px;text-align:center;top:352.10px;font-size:7px;color:#fff;transform:scaleX(0.8450);transform-origin:center center;font-weight:bold"><span id="t54">And</span></div>
<div class="a" style="left:276px;top:349.0px;width:39.2px;height:13px;border-radius:6.500px;background:#5c7c95"></div>
<div class="t" style="left:145.60px;width:300px;text-align:center;top:352.10px;font-size:7px;color:#fff;transform:scaleX(0.9096);transform-origin:center center;font-weight:bold"><span id="t55">Include</span></div>
<svg class="a" style="left:325.5px;top:350.3px" width="11" height="10" viewBox="0 0 11 10" fill="none" stroke="#777b80" stroke-width="0.950"><circle cx="4" cy="6.700" r="2.700" fill="#d9dadb"/><circle cx="7.300" cy="3.400" r="2.750" fill="#e4e5e6"/><path d="M7.300 1.900 v3 M8.100 2.500 h-1.200 a0.500 0.500 0 0 0 0 1 h0.800 a0.500 0.500 0 0 1 0 1 h-1.300" stroke-width="0.550"/><path d="M2.800 6.700 h2.400 M4 5.500 v2.400" stroke-width="0.500"/></svg>
<div class="t" style="left:339.00px;top:352.30px;font-size:7px;color:#3c4a57;transform:scaleX(0.9652);transform-origin:left center;"><span id="t56">Internet Sales</span></div>
<svg class="a" style="left:384.09999999999997px;top:353.2px" width="6.6" height="5" viewBox="0 0 6.6 5" fill="none" stroke="#3a434c" stroke-width="1.150"><path d="M0.500 0.700 L3.300 3.700 L6.100 0.700"/></svg>
<div class="t" style="left:406.00px;top:352.30px;font-size:7px;color:#7f8489;transform:scaleX(0.9745);transform-origin:left center;"><span id="t57">Internet Sales</span></div>
<div class="t" style="left:459.70px;top:352.30px;font-size:7px;color:#1e252c;transform:scaleX(0.9476);transform-origin:left center;"><span id="t58">Recent Sales over $100</span></div>
<svg class="a" style="left:680px;top:350.0px" width="4" height="11" viewBox="0 0 4 11" fill="#3a434c"><circle cx="2" cy="2" r="0.900"/><circle cx="2" cy="5.500" r="0.900"/><circle cx="2" cy="9" r="0.900"/></svg>
<div class="a" style="left:223px;top:265.2px;width:472.500px;height:28.5px;border:1px solid #e9ebed;border-radius:4px;background:#fff;box-shadow:0 1px 2px rgba(0,0,0,.06)"></div>
<svg class="a" style="left:232px;top:274.9px" width="8" height="9" viewBox="0 0 8 9" fill="none" stroke="#9196a3" stroke-width="0.900"><path d="M0.600 0.600 H5 L7.400 2.800 V8.400 H0.600 Z" fill="#e3ebf6"/><path d="M2.300 3.300 h2.700 l0.800 0.800 v2.900 h-3.500 z" fill="#a9bfdf" stroke="none"/><path d="M3 5 h2 M3 6.200 h2" stroke="#5f83bb" stroke-width="0.600"/></svg>
<div class="a" style="left:248.5px;top:266.2px;width:1px;height:26.5px;background:#f0f0f0;"></div>
<div class="t" style="left:127.00px;width:300px;text-align:center;top:274.70px;font-size:9.4px;color:#3f4a55;transform:scaleX(0.9757);transform-origin:center center;"><span id="t59">Include</span></div>
<div class="a" style="left:305px;top:266.2px;width:1px;height:26.5px;background:#f0f0f0;"></div>
<div class="t" style="left:314.00px;top:274.70px;font-size:9.4px;color:#3f4a55;transform:scaleX(0.9503);transform-origin:left center;"><span id="t60">Education is either Bachelors, Graduate Degree or Partial College</span></div>
<svg class="a" style="left:658.5px;top:275.09999999999997px" width="9" height="9" viewBox="0 0 9 9" fill="none" stroke="#5b86c5" stroke-width="0.850"><path d="M0.700 2.300 h8"/><path d="M0.700 6.300 h6" stroke="#6f7680"/><circle cx="4.300" cy="2.300" r="1.150" fill="#fff"/><circle cx="7" cy="6.300" r="1.150" fill="#fff" stroke="#4a545e"/></svg>
<svg class="a" style="left:680px;top:273.9px" width="4" height="11" viewBox="0 0 4 11" fill="#3a434c"><circle cx="2" cy="2" r="0.900"/><circle cx="2" cy="5.500" r="0.900"/><circle cx="2" cy="9" r="0.900"/></svg>
<div class="a" style="left:223px;top:304.8px;width:472.500px;height:28.5px;border:1px solid #e9ebed;border-radius:4px;background:#fff;box-shadow:0 1px 2px rgba(0,0,0,.06)"></div>
<svg class="a" style="left:232px;top:314.5px" width="8" height="9" viewBox="0 0 8 9" fill="none" stroke="#9196a3" stroke-width="0.900"><path d="M0.600 0.600 H5 L7.400 2.800 V8.400 H0.600 Z" fill="#e3ebf6"/><path d="M2.300 3.300 h2.700 l0.800 0.800 v2.900 h-3.500 z" fill="#a9bfdf" stroke="none"/><path d="M3 5 h2 M3 6.200 h2" stroke="#5f83bb" stroke-width="0.600"/></svg>
<div class="a" style="left:248.5px;top:305.8px;width:1px;height:26.5px;background:#f0f0f0;"></div>
<div class="t" style="left:117.30px;width:300px;text-align:center;top:314.30px;font-size:9.4px;color:#3f4a55;transform:scaleX(0.9588);transform-origin:center center;"><span id="t61">And</span></div>
<div class="a" style="left:285.5px;top:305.8px;width:1px;height:26.5px;background:#f0f0f0;"></div>
<div class="t" style="left:164.20px;width:300px;text-align:center;top:314.30px;font-size:9.4px;color:#3f4a55;transform:scaleX(0.9757);transform-origin:center center;"><span id="t62">Include</span></div>
<div class="a" style="left:342px;top:305.8px;width:1px;height:26.5px;background:#f0f0f0;"></div>
<div class="t" style="left:351.00px;top:314.30px;font-size:9.4px;color:#3f4a55;transform:scaleX(0.9438);transform-origin:left center;"><span id="t63">House Owner Flag is 1</span></div>
<svg class="a" style="left:658.5px;top:314.7px" width="9" height="9" viewBox="0 0 9 9" fill="none" stroke="#5b86c5" stroke-width="0.850"><path d="M0.700 2.300 h8"/><path d="M0.700 6.300 h6" stroke="#6f7680"/><circle cx="4.300" cy="2.300" r="1.150" fill="#fff"/><circle cx="7" cy="6.300" r="1.150" fill="#fff" stroke="#4a545e"/></svg>
<svg class="a" style="left:680px;top:313.5px" width="4" height="11" viewBox="0 0 4 11" fill="#3a434c"><circle cx="2" cy="2" r="0.900"/><circle cx="2" cy="5.500" r="0.900"/><circle cx="2" cy="9" r="0.900"/></svg>
<div class="a" style="left:223px;top:376px;width:472.500px;height:28.5px;border:1px solid #e9ebed;border-radius:4px;background:#fff;box-shadow:0 1px 2px rgba(0,0,0,.06)"></div>
<svg class="a" style="left:230.5px;top:385.2px" width="11" height="10" viewBox="0 0 11 10" fill="none" stroke="#777b80" stroke-width="0.950"><circle cx="4" cy="6.700" r="2.700" fill="#d9dadb"/><circle cx="7.300" cy="3.400" r="2.750" fill="#e4e5e6"/><path d="M7.300 1.900 v3 M8.100 2.500 h-1.200 a0.500 0.500 0 0 0 0 1 h0.800 a0.500 0.500 0 0 1 0 1 h-1.300" stroke-width="0.550"/><path d="M2.800 6.700 h2.400 M4 5.500 v2.400" stroke-width="0.500"/></svg>
<div class="a" style="left:248.5px;top:377px;width:1px;height:26.5px;background:#f0f0f0;"></div>
<div class="t" style="left:127.00px;width:300px;text-align:center;top:385.50px;font-size:9.4px;color:#3f4a55;transform:scaleX(0.9757);transform-origin:center center;"><span id="t64">Include</span></div>
<div class="a" style="left:305px;top:377px;width:1px;height:26.5px;background:#f0f0f0;"></div>
<div class="t" style="left:314.00px;top:385.50px;font-size:9.4px;color:#3f4a55;transform:scaleX(0.9708);transform-origin:left center;"><span id="t65">Sales Amount is more than $100.00</span></div>
<svg class="a" style="left:658.5px;top:385.9px" width="9" height="9" viewBox="0 0 9 9" fill="none" stroke="#5b86c5" stroke-width="0.850"><path d="M0.700 2.300 h8"/><path d="M0.700 6.300 h6" stroke="#6f7680"/><circle cx="4.300" cy="2.300" r="1.150" fill="#fff"/><circle cx="7" cy="6.300" r="1.150" fill="#fff" stroke="#4a545e"/></svg>
<svg class="a" style="left:680px;top:384.7px" width="4" height="11" viewBox="0 0 4 11" fill="#3a434c"><circle cx="2" cy="2" r="0.900"/><circle cx="2" cy="5.500" r="0.900"/><circle cx="2" cy="9" r="0.900"/></svg>
<div class="a" style="left:223px;top:415.4px;width:472.500px;height:28px;border:1px solid #e9ebed;border-radius:4px;background:#fff;box-shadow:0 1px 2px rgba(0,0,0,.06)"></div>
<svg class="a" style="left:230.5px;top:425.2px" width="11" height="10" viewBox="0 0 11 10" fill="none" stroke="#777b80" stroke-width="0.950"><circle cx="4" cy="6.700" r="2.700" fill="#d9dadb"/><circle cx="7.300" cy="3.400" r="2.750" fill="#e4e5e6"/><path d="M7.300 1.900 v3 M8.100 2.500 h-1.200 a0.500 0.500 0 0 0 0 1 h0.800 a0.500 0.500 0 0 1 0 1 h-1.300" stroke-width="0.550"/><path d="M2.800 6.700 h2.400 M4 5.500 v2.400" stroke-width="0.500"/></svg>
<div class="a" style="left:248.5px;top:416.4px;width:1px;height:26.5px;background:#f0f0f0;"></div>
<div class="t" style="left:117.30px;width:300px;text-align:center;top:425.50px;font-size:9.4px;color:#3f4a55;transform:scaleX(0.9588);transform-origin:center center;"><span id="t66">And</span></div>
<div class="a" style="left:285.5px;top:416.4px;width:1px;height:26.5px;background:#f0f0f0;"></div>
<div class="t" style="left:164.20px;width:300px;text-align:center;top:425.50px;font-size:9.4px;color:#3f4a55;transform:scaleX(0.9757);transform-origin:center center;"><span id="t67">Include</span></div>
<div class="a" style="left:342px;top:416.4px;width:1px;height:26.5px;background:#f0f0f0;"></div>
<div class="t" style="left:351.00px;top:425.50px;font-size:9.4px;color:#3f4a55;transform:scaleX(0.9676);transform-origin:left center;"><span id="t68">Order Date is within 1 month of now</span></div>
<svg class="a" style="left:658.5px;top:425.9px" width="9" height="9" viewBox="0 0 9 9" fill="none" stroke="#5b86c5" stroke-width="0.850"><path d="M0.700 2.300 h8"/><path d="M0.700 6.300 h6" stroke="#6f7680"/><circle cx="4.300" cy="2.300" r="1.150" fill="#fff"/><circle cx="7" cy="6.300" r="1.150" fill="#fff" stroke="#4a545e"/></svg>
<svg class="a" style="left:680px;top:424.7px" width="4" height="11" viewBox="0 0 4 11" fill="#3a434c"><circle cx="2" cy="2" r="0.900"/><circle cx="2" cy="5.500" r="0.900"/><circle cx="2" cy="9" r="0.900"/></svg>
<div class="a" style="left:0px;top:0px;width:886px;height:1px;background:#000;"></div>
<div class="a" style="left:0px;top:456px;width:886px;height:1px;background:#000;"></div>
<div class="a" style="left:0px;top:455px;width:886px;height:1px;background:rgba(0,0,0,.5);"></div>
<div class="a" style="left:0px;top:0px;width:1px;height:457px;background:#000;"></div>
<div class="a" style="left:1px;top:0px;width:1px;height:457px;background:rgba(0,0,0,.12);"></div>
<div class="a" style="left:885px;top:0px;width:1px;height:457px;background:#000;"></div>
<div class="a" style="left:884px;top:0px;width:1px;height:457px;background:rgba(0,0,0,.15);"></div>
</body></html>
